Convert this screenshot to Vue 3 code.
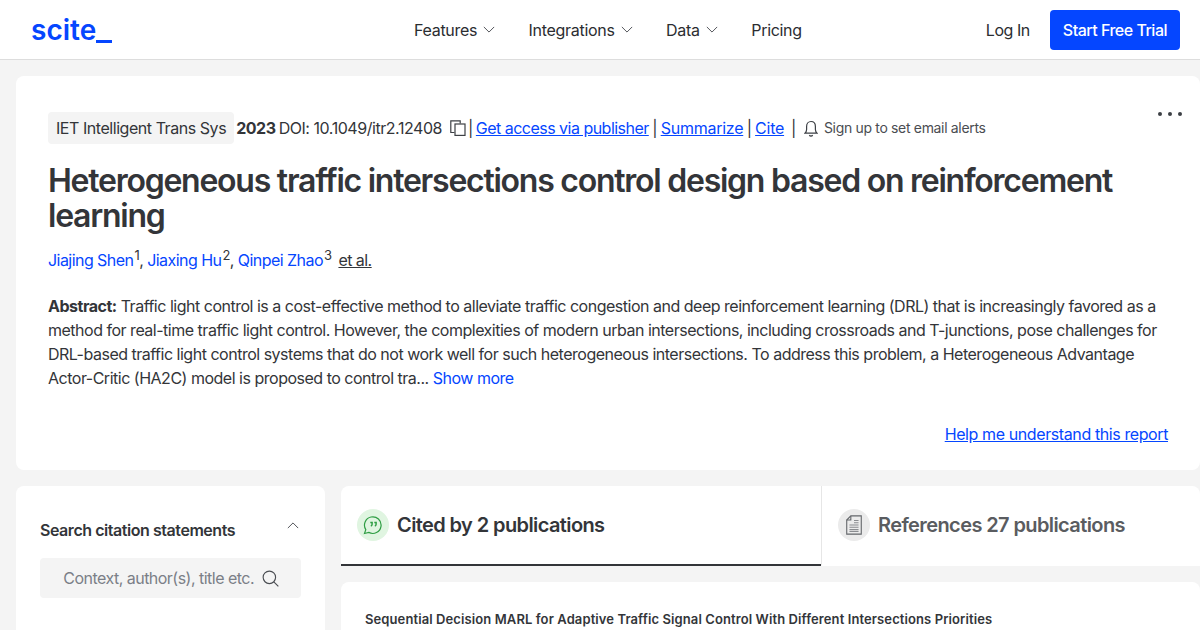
<template>
  <div class="page">
    <header class="topbar">
      <div class="logo">scite<span class="logo-bar"></span></div>
      <nav class="nav">
        <a v-for="item in navItems" :key="item.label" class="nav-item">
          {{ item.label }}
          <svg v-if="item.menu" class="chev" viewBox="0 0 14 8"><path d="M1 1l6 6 6-6" /></svg>
        </a>
      </nav>
      <div class="actions">
        <a class="login">Log In</a>
        <a class="trial">Start Free Trial</a>
      </div>
    </header>

    <main class="content">
      <section class="report card">
        <div class="meta">
          <span class="journal">IET Intelligent Trans Sys</span>
          <b class="year">2023</b>
          <span class="doi">DOI: 10.1049/itr2.12408</span>
          <svg class="copy" viewBox="0 0 16 16">
            <path d="M4.500 12.500H.8V.8h9.400v2.700" />
            <rect x="5" y="4" width="10" height="11.400" />
          </svg>
          <span class="sep first">|</span>
          <a class="link tight">Get access via publisher</a>
          <span class="sep">|</span>
          <a class="link wide">Summarize</a>
          <span class="sep">|</span>
          <a class="link wide">Cite</a>
          <span class="sep last">|</span>
          <svg class="bell" viewBox="0 0 14 17">
            <path d="M1 13.200c1-1 1.600-1.900 1.600-3.600V6.400C2.600 3.500 4.500 1.500 7 1.500s4.400 2 4.400 4.900v3.200c0 1.700.6 2.600 1.600 3.600z" />
            <path d="M5.400 15c.3.8.9 1.200 1.600 1.200s1.300-.4 1.600-1.200" />
          </svg>
          <span class="alerts">Sign up to set email alerts</span>
        </div>
        <div class="dots"><i></i><i></i><i></i></div>

        <h1>Heterogeneous traffic intersections control design based on reinforcement learning</h1>

        <p class="authors">
          <template v-for="(author, i) in authors" :key="author">
            <a class="author">{{ author }}</a><sup>{{ i + 1 }}</sup><span v-if="i < authors.length - 1">, </span>
          </template>
          <a class="etal">et al.</a>
        </p>

        <p class="abstract">
          <b>Abstract:</b> Traffic light control is a cost-effective method to alleviate traffic congestion and deep reinforcement learning (DRL) that is increasingly favored as a method for real-time traffic light control. However, the complexities of modern urban intersections, including crossroads and T-junctions, pose challenges for DRL-based traffic light control systems that do not work well for such heterogeneous intersections. To address this problem, a Heterogeneous Advantage Actor-Critic (HA2C) model is proposed to control tra... <a class="more">Show more</a>
        </p>

        <div class="help"><a class="link">Help me understand this report</a></div>
      </section>

      <div class="columns">
        <aside class="search card">
          <div class="search-head">
            <h2>Search citation statements</h2>
            <svg class="chev up" viewBox="0 0 14 8"><path d="M1 7l6-6 6 6" /></svg>
          </div>
          <div class="search-box">
            <span>Context, author(s), title etc.</span>
            <svg viewBox="0 0 18 18"><circle cx="7.800" cy="7.800" r="6.600" /><path d="M12.500 12.500l4.800 4.800" /></svg>
          </div>
        </aside>

        <div class="results">
          <div class="tabs">
            <div class="tab active">
              <span class="tab-icon green">
                <svg viewBox="0 0 20 20">
                  <path d="M1.500 18.500l1.300-3.900A8.300 8.300 0 1 1 5.800 17.400z" />
                  <path class="quote" d="M7.300 7.500h1.800v1.700c0 1-.5 1.600-1.300 1.900M11.300 7.500h1.800v1.700c0 1-.5 1.600-1.300 1.900" />
                </svg>
              </span>
              Cited by 2 publications
            </div>
            <div class="tab">
              <span class="tab-icon grey">
                <svg viewBox="0 0 18 22">
                  <path d="M5.500 1H17v20H1V5.500z" />
                  <path d="M5.500 1v4.500H1" />
                  <path class="lines" d="M9 6h5M9 8.500h5M4 11h10M4 13.500h10M4 16h10M4 18h10" />
                </svg>
              </span>
              References 27 publications
            </div>
          </div>
          <article class="cite-card">
            <h3>Sequential Decision MARL for Adaptive Traffic Signal Control With Different Intersections Priorities</h3>
          </article>
        </div>
      </div>
    </main>
  </div>
</template>

<script setup>
const navItems = [
  { label: 'Features', menu: true },
  { label: 'Integrations', menu: true },
  { label: 'Data', menu: true },
  { label: 'Pricing', menu: false }
];

const authors = ['Jiajing Shen', 'Jiaxing Hu', 'Qinpei Zhao'];
</script>

<style>
html,
body {
  margin: 0;
  height: 100%;
  overflow: hidden;
  background: #f4f4f4;
}
</style>

<style scoped>
.page {
  height: 630px;
  overflow: hidden;
  background: #f4f4f4;
  color: #333539;
  font-family: Inter, "Liberation Sans", sans-serif;
  font-size: 16px;
  letter-spacing: -0.45px;
}

/* top bar */
.topbar {
  display: flex;
  align-items: center;
  height: 59px;
  padding: 0 20px 0 31px;
  background: #fff;
  border-bottom: 1px solid #ddd;
}

.logo {
  display: flex;
  align-items: flex-end;
  flex: 0 0 383px;
  color: #0546ff;
  font-size: 28px;
  font-weight: 600;
  line-height: 28px;
  letter-spacing: 0;
}

.logo-bar {
  width: 16px;
  height: 3px;
  margin: 0 0 1px 0;
  background: #0546ff;
}

.nav {
  display: flex;
  gap: 33.500px;
  letter-spacing: -0.3px;
}

.nav-item {
  display: flex;
  align-items: center;
  gap: 6px;
  color: #2b2d31;
}

.chev {
  width: 12px;
  height: 7px;
  fill: none;
  stroke: #4a4d52;
  stroke-width: 1.100;
}

.actions {
  display: flex;
  align-items: center;
  gap: 20px;
  margin-left: auto;
}

.login {
  color: #2b2d31;
}

.trial {
  padding: 10px 13px;
  border-radius: 4px;
  background: #0546ff;
  color: #fff;
  font-weight: 500;
  line-height: 20px;
  letter-spacing: -0.5px;
}

/* cards */
.content {
  padding: 16px 0 0 16px;
}

.card {
  background: #fff;
  border-radius: 8px;
}

.report {
  position: relative;
  height: 394px;
  box-sizing: border-box;
  padding: 36px 32px 0;
}

.meta {
  display: flex;
  align-items: center;
  height: 32px;
  white-space: nowrap;
}

.journal {
  padding: 0 8px;
  border-radius: 4px;
  background: #f4f4f4;
  line-height: 32px;
}

.year {
  margin-left: 2px;
}

.doi {
  margin-left: 3px;
}

.copy {
  width: 16px;
  height: 16px;
  margin-left: 8px;
  fill: none;
  stroke: #3d4045;
  stroke-width: 1.200;
}

.sep {
  margin: 0 3.500px;
}

.sep.first {
  margin: 0 3px 0 2px;
}

.sep.last {
  margin: 0 8px 0 7px;
}

.link,
.author,
.more {
  color: #0546ff;
}

.link {
  text-decoration: underline;
}

.link.tight {
  letter-spacing: -0.52px;
}

.link.wide {
  letter-spacing: -0.25px;
}

.bell {
  width: 14px;
  height: 17px;
  fill: none;
  stroke: #3d4045;
  stroke-width: 1.200;
}

.alerts {
  margin: 0 0 2px 6px;
  color: #4a4d52;
  font-size: 14px;
  letter-spacing: -0.33px;
}

.dots {
  position: absolute;
  top: 36px;
  right: 18px;
  display: flex;
  gap: 6px;
}

.dots i {
  width: 4px;
  height: 4px;
  border-radius: 50%;
  background: #3d4045;
}

h1 {
  margin: 19px 0 0;
  color: #333539;
  font-size: 32px;
  font-weight: 600;
  line-height: 35px;
  letter-spacing: -1.25px;
}

.authors {
  margin: 15px 0 0;
  line-height: 24px;
  letter-spacing: -0.55px;
}

sup {
  margin-left: 1px;
  font-size: 13px;
  line-height: 0;
}

.etal {
  margin-left: 7px;
  text-decoration: underline;
}

.abstract {
  margin: 22px 0 0;
  line-height: 24px;
  letter-spacing: -0.49px;
}

.help {
  margin-top: 32px;
  text-align: right;
  line-height: 24px;
  letter-spacing: -0.4px;
}

.columns {
  display: flex;
  gap: 16px;
  margin-top: 16px;
}

/* search panel */
.search {
  flex: 0 0 309px;
  box-sizing: border-box;
  height: 200px;
  padding: 32px 24px;
}

.search-head {
  display: flex;
  align-items: flex-start;
  justify-content: space-between;
}

h2 {
  margin: 0;
  font-size: 16px;
  font-weight: 600;
  line-height: 24px;
}

.up {
  margin: 4px 2px 0 0;
}

.search-box {
  display: flex;
  align-items: center;
  justify-content: flex-end;
  gap: 8px;
  height: 40px;
  margin-top: 16px;
  padding-right: 22px;
  border-radius: 4px;
  background: #f4f4f4;
  color: #7b7f87;
  letter-spacing: -0.52px;
}

.search-box svg {
  width: 17px;
  height: 17px;
  fill: none;
  stroke: #4a4d52;
  stroke-width: 1.200;
}

/* tabs */
.results {
  flex: 1;
}

.tabs {
  display: flex;
  height: 80px;
  border-radius: 8px 8px 0 0;
  background: #fff;
}

.tab {
  display: flex;
  flex: 1;
  align-items: center;
  gap: 8px;
  box-sizing: border-box;
  padding: 0 16px;
  color: #5a5c60;
  font-size: 20px;
  font-weight: 600;
  letter-spacing: -0.6px;
  border-left: 1px solid #e6e6e6;
  border-bottom: 2px solid transparent;
}

.tab.active {
  flex: 0 0 480px;
  color: #333539;
  border-left: 0;
  border-bottom-color: #333539;
}

.tab-icon {
  display: flex;
  align-items: center;
  justify-content: center;
  width: 32px;
  height: 32px;
  border-radius: 50%;
}

.tab-icon.green {
  background: #e0f5e1;
}

.tab-icon.grey {
  background: #ebebeb;
}

.tab-icon svg {
  width: 20px;
  height: 20px;
  fill: none;
  stroke-width: 1.200;
}

.green svg {
  stroke: #2f9e44;
}

.grey svg {
  stroke: #63666a;
}

.grey svg .lines {
  stroke: #8a8c90;
}

.green svg .quote {
  stroke-width: 1.500;
}

.cite-card {
  height: 60px;
  margin-top: 16px;
  padding: 24px;
  border-radius: 8px 8px 0 0;
  background: #fff;
}

h3 {
  margin: 0;
  font-size: 13px;
  font-weight: 600;
  line-height: 26px;
  letter-spacing: 0.1px;
}
</style>
